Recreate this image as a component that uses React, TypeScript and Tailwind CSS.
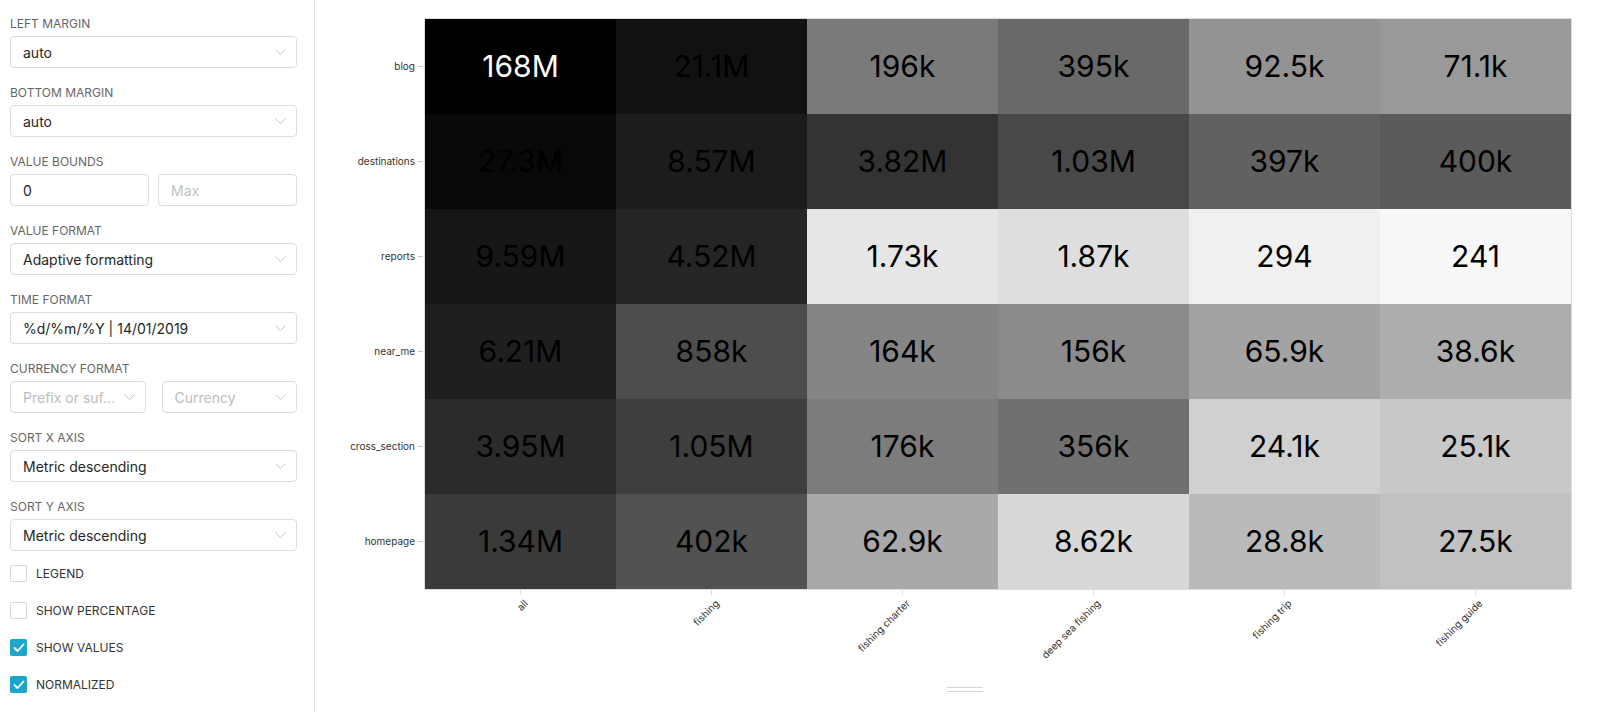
import React from 'react';

const rows = ['blog', 'destinations', 'reports', 'near_me', 'cross_section', 'homepage'];
const cols = ['all', 'fishing', 'fishing charter', 'deep sea fishing', 'fishing trip', 'fishing guide'];

// [value, background]
const cells: [string, string][][] = [
  [['168M', '#000000'], ['21.1M', '#111111'], ['196k', '#7a7a7a'], ['395k', '#696969'], ['92.5k', '#939393'], ['71.1k', '#999999']],
  [['27.3M', '#080808'], ['8.57M', '#1c1c1c'], ['3.82M', '#333333'], ['1.03M', '#484848'], ['397k', '#616161'], ['400k', '#5a5a5a']],
  [['9.59M', '#161616'], ['4.52M', '#252525'], ['1.73k', '#e6e6e6'], ['1.87k', '#dedede'], ['294', '#f0f0f0'], ['241', '#f7f7f7']],
  [['6.21M', '#1f1f1f'], ['858k', '#4d4d4d'], ['164k', '#858585'], ['156k', '#8b8b8b'], ['65.9k', '#a3a3a3'], ['38.6k', '#adadad']],
  [['3.95M', '#2b2b2b'], ['1.05M', '#3e3e3e'], ['176k', '#7c7c7c'], ['356k', '#707070'], ['24.1k', '#d0d0d0'], ['25.1k', '#c8c8c8']],
  [['1.34M', '#3a3a3a'], ['402k', '#525252'], ['62.9k', '#a9a9a9'], ['8.62k', '#d8d8d8'], ['28.8k', '#bababa'], ['27.5k', '#c1c1c1']],
];

const Chevron = () => (
  <svg width="11" height="6" viewBox="0 0 11 6" fill="none" className="shrink-0">
    <path d="M0.5 0.5L5.5 5.5L10.5 0.5" stroke="#c4c4c4" strokeWidth="1" />
  </svg>
);

const Select: React.FC<{ value: string; placeholder?: boolean }> = ({ value, placeholder }) => (
  <div className="flex h-[32px] items-center justify-between rounded-[4px] border border-[#dcdcdc] bg-white pl-[12px] pr-[10px]">
    <span className={`truncate text-[14px] ${placeholder ? 'text-[#bdbdbd]' : 'text-[#262626]'}`}>{value}</span>
    <Chevron />
  </div>
);

const Field: React.FC<{ label: string; last?: boolean; children: React.ReactNode }> = ({ label, last, children }) => (
  <div className={`flex flex-col gap-[4px] ${last ? 'mb-[14px]' : 'mb-[17px]'}`}>
    <div className="h-[16px] text-[12px] leading-[16px] uppercase text-[#666666]">{label}</div>
    {children}
  </div>
);

const Checkbox: React.FC<{ label: string; checked?: boolean }> = ({ label, checked }) => (
  <div className="mb-[20px] flex h-[17px] items-center gap-[9px]">
    {checked ? (
      <div className="flex h-[17px] w-[17px] items-center justify-center rounded-[2px] bg-[#1da6cb]">
        <svg width="12" height="10" viewBox="0 0 12 10" fill="none">
          <path d="M1.5 5L4.5 8L10.5 1.5" stroke="white" strokeWidth="1.8" strokeLinecap="round" strokeLinejoin="round" />
        </svg>
      </div>
    ) : (
      <div className="h-[17px] w-[17px] rounded-[2px] border border-[#d6d6d6] bg-white" />
    )}
    <span className="text-[12px] uppercase text-[#333333]">{label}</span>
  </div>
);

const App: React.FC = () => {
  return (
    <div className="flex h-[712px] w-[1599px] overflow-hidden bg-white font-['Inter',sans-serif]">
      <aside className="flex w-[315px] shrink-0 flex-col border-r border-[#e3e3e3]">
        <div className="flex h-[2px]">
          <div className="w-[122px] bg-[#414c6b]" />
          <div className="flex-1 bg-[#f0f0f0]" />
        </div>
        <div className="pl-[10px] pr-[17px] pt-[16px]">
          <Field label="Left margin">
            <Select value="auto" />
          </Field>
          <Field label="Bottom margin">
            <Select value="auto" />
          </Field>
          <Field label="Value bounds">
            <div className="grid grid-cols-2 gap-[9px]">
              <div className="flex h-[32px] items-center rounded-[4px] border border-[#dcdcdc] pl-[12px] text-[14px] text-[#262626]">0</div>
              <div className="flex h-[32px] items-center rounded-[4px] border border-[#dcdcdc] pl-[12px] text-[14px] text-[#c2c2c2]">Max</div>
            </div>
          </Field>
          <Field label="Value format">
            <Select value="Adaptive formatting" />
          </Field>
          <Field label="Time format">
            <Select value="%d/%m/%Y | 14/01/2019" />
          </Field>
          <Field label="Currency format">
            <div className="grid grid-cols-2 gap-[16px]">
              <Select value="Prefix or suf..." placeholder />
              <Select value="Currency" placeholder />
            </div>
          </Field>
          <Field label="Sort X axis">
            <Select value="Metric descending" />
          </Field>
          <Field label="Sort Y axis" last>
            <Select value="Metric descending" />
          </Field>
          <Checkbox label="Legend" />
          <Checkbox label="Show percentage" />
          <Checkbox label="Show values" checked />
          <Checkbox label="Normalized" checked />
        </div>
      </aside>

      <main className="flex flex-1 flex-col pt-[18px]">
        <div className="flex">
          <div className="grid h-[572px] w-[109px] grid-rows-6 py-[1px]">
            {rows.map(r => (
              <div key={r} className="flex items-center justify-end pr-[1px]">
                <span className="text-[10px] text-[#333333]">{r}</span>
                <div className="ml-[3px] h-px w-[5px] bg-[#cccccc]" />
              </div>
            ))}
          </div>
          <div className="grid h-[572px] w-[1148px] grid-cols-6 grid-rows-6 border border-[#dcdcdc]">
            {cells.flat().map(([v, bg], i) => (
              <div
                key={i}
                className={`flex items-center justify-center text-[30px] ${i === 0 ? 'text-white' : 'text-black'}`}
                style={{ backgroundColor: bg }}
              >
                {v}
              </div>
            ))}
          </div>
        </div>
        <div className="flex h-[97px] pl-[110px]">
          <div className="grid w-[1146px] grid-cols-6">
            {cols.map(c => (
              <div key={c} className="flex flex-col items-center">
                <div className="h-[5px] w-px bg-[#dddddd]" />
                <div className="relative h-0 w-0">
                  <span className="absolute right-[-1px] top-[2px] origin-top-right -rotate-45 whitespace-nowrap text-[10px] leading-[12px] text-[#333333]">
                    {c}
                  </span>
                </div>
              </div>
            ))}
          </div>
        </div>
        <div className="ml-[632px] flex w-[36px] flex-col gap-[3px]">
          <div className="h-px bg-[#d4d4d4]" />
          <div className="h-px bg-[#d4d4d4]" />
        </div>
      </main>
    </div>
  );
};

export default App;
